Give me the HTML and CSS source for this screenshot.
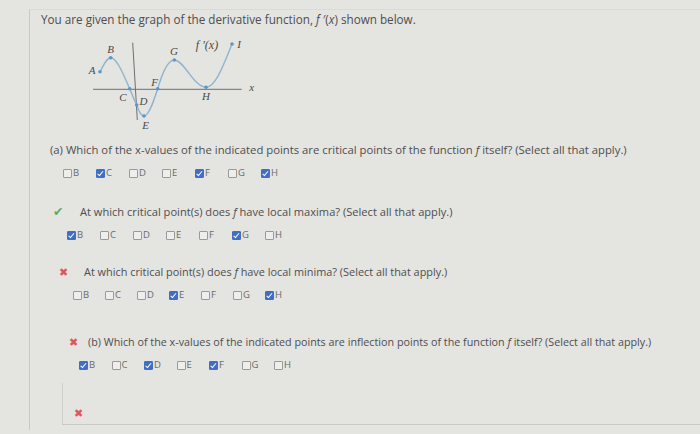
FILE: index.html
```html
<!DOCTYPE html>
<html>
<head>
<meta charset="utf-8">
<link rel="stylesheet" href="styles.css">
</head>
<body>
<div class="page">
  <div class="frame">
    <p class="title">You are given the graph of the derivative function, <i>f</i> ′(<i>x</i>) shown below.</p>
    <svg class="graph" width="180" height="96" viewBox="0 0 180 96">
      <line x1="13" y1="53.3" x2="161.7" y2="53.3" class="axis"/>
      <line x1="52.7" y1="6.7" x2="57.3" y2="84" class="axis"/>
      <path class="curve" d="M20,35.7 C24,28 27,21.7 30.7,21.7 C37,21.7 44,40 49.7,52.7 C52,58 54,64 56.7,69 C59,76 61,80 64,80 C69,80 74,64 77.7,52.7 C82,38 88,24 94.3,24 C104,24 114,51.3 126,51.3 C136,51.3 145,25 152,8"/>
      <g class="pts">
        <circle cx="20" cy="35.7" r="1.8"/>
        <circle cx="30.7" cy="21.7" r="1.8"/>
        <circle cx="49.7" cy="52.7" r="1.8"/>
        <circle cx="56.7" cy="69" r="1.8"/>
        <circle cx="64" cy="80" r="1.8"/>
        <circle cx="77.7" cy="52.7" r="1.8"/>
        <circle cx="94.3" cy="24" r="1.8"/>
        <circle cx="126" cy="51.3" r="1.8"/>
        <circle cx="152" cy="8" r="1.8"/>
      </g>
      <g class="lbl">
        <text x="12" y="38">A</text>
        <text x="30.7" y="17">B</text>
        <text x="43" y="64.5">C</text>
        <text x="63.5" y="69">D</text>
        <text x="65.7" y="93">E</text>
        <text x="74.7" y="49.5">F</text>
        <text x="94" y="19">G</text>
        <text x="126" y="64">H</text>
        <text class="fp" x="127" y="13">f ′(x)</text>
        <text x="159" y="12">I</text>
        <text x="171.7" y="55">x</text>
      </g>
    </svg>

    <section class="part part-a">
      <p class="q">(a) Which of the x-values of the indicated points are critical points of the function <i>f</i> itself? (Select all that apply.)</p>
      <div class="opts">
        <span class="opt"><span class="box"></span>B</span>
        <span class="opt"><span class="box on"></span>C</span>
        <span class="opt"><span class="box"></span>D</span>
        <span class="opt"><span class="box"></span>E</span>
        <span class="opt"><span class="box on"></span>F</span>
        <span class="opt"><span class="box"></span>G</span>
        <span class="opt"><span class="box on"></span>H</span>
      </div>
    </section>

    <div class="inner">
      <section class="part part-max">
        <p class="q"><span class="mark ok">✔</span>At which critical point(s) does <i>f</i> have local maxima? (Select all that apply.)</p>
        <div class="opts">
          <span class="opt"><span class="box on"></span>B</span>
          <span class="opt"><span class="box"></span>C</span>
          <span class="opt"><span class="box"></span>D</span>
          <span class="opt"><span class="box"></span>E</span>
          <span class="opt"><span class="box"></span>F</span>
          <span class="opt"><span class="box on"></span>G</span>
          <span class="opt"><span class="box"></span>H</span>
        </div>
      </section>

      <section class="part part-min">
        <p class="q"><span class="mark bad">✖</span>At which critical point(s) does <i>f</i> have local minima? (Select all that apply.)</p>
        <div class="opts">
          <span class="opt"><span class="box"></span>B</span>
          <span class="opt"><span class="box"></span>C</span>
          <span class="opt"><span class="box"></span>D</span>
          <span class="opt"><span class="box on"></span>E</span>
          <span class="opt"><span class="box"></span>F</span>
          <span class="opt"><span class="box"></span>G</span>
          <span class="opt"><span class="box on"></span>H</span>
        </div>
      </section>

      <section class="part part-b">
        <p class="q"><span class="mark bad">✖</span>(b) Which of the x-values of the indicated points are inflection points of the function <i>f</i> itself? (Select all that apply.)</p>
        <div class="opts">
          <span class="opt"><span class="box on"></span>B</span>
          <span class="opt"><span class="box"></span>C</span>
          <span class="opt"><span class="box on"></span>D</span>
          <span class="opt"><span class="box"></span>E</span>
          <span class="opt"><span class="box on"></span>F</span>
          <span class="opt"><span class="box"></span>G</span>
          <span class="opt"><span class="box"></span>H</span>
        </div>
      </section>

      <div class="feedback"><span class="mark bad">✖</span></div>
    </div>
  </div>
</div>
</body>
</html>
```

FILE: styles.css
```css
html, body {
  margin: 0;
  padding: 0;
  background: #e4e4e1;
  width: 700px;
  height: 434px;
  overflow: hidden;
  font-family: "Open Sans", "DejaVu Sans", sans-serif;
  color: #4e4e4e;
}
.page {
  padding-top: 9px;
  padding-left: 29px;
}
.frame {
  border-left: 1px solid #c9c9c6;
  border-top: 1px solid #dadad7;
  padding: 0 0 0 11px;
  height: 420px;
  display: flex;
  flex-direction: column;
}
.title {
  margin: 2px 0 0 0;
  font-size: 11.7px;
  line-height: 14px;
  white-space: nowrap;
}
.title i { font-style: italic; }
.graph {
  display: block;
  margin: 10px 0 0 39px;
}
.axis { stroke: #6f6f6f; stroke-width: 1; }
.curve { fill: none; stroke: #8fb4cf; stroke-width: 1.4; }
.pts circle { fill: #5d97c6; }
.lbl text {
  font-family: "Liberation Serif", "DejaVu Serif", serif;
  font-style: italic;
  font-size: 11px;
  fill: #4a4a4a;
  text-anchor: middle;
}
.lbl .fp { font-size: 12px; }
.part { display: flex; flex-direction: column; }
.q {
  margin: 0;
  font-size: 11.3px;
  line-height: 14px;
  white-space: nowrap;
}
.q i { font-style: italic; }
.opts {
  display: flex;
  margin-top: 11px;
  height: 10px;
}
.opt {
  width: 33px;
  display: flex;
  align-items: center;
  font-size: 9.5px;
  line-height: 10px;
  color: #6b6b6b;
}
.box {
  width: 7px;
  height: 7px;
  border: 1px solid #9a9a9a;
  border-radius: 1px;
  background: #eeeeec;
  margin-right: 1px;
  position: relative;
}
.box.on {
  background: #3f6ec2;
  border-color: #3f6ec2;
}
.box.on::after {
  content: "";
  position: absolute;
  left: 2px;
  top: 0;
  width: 2px;
  height: 4.5px;
  border: solid #fff;
  border-width: 0 1.5px 1.5px 0;
  transform: rotate(40deg);
}
.part-a { margin-top: 11px; padding-left: 9px; }
.part-a .opts { padding-left: 13px; }
.inner {
  margin-top: 27px;
  flex: 1;
  display: flex;
  flex-direction: column;
}
.mark {
  display: inline-block;
  font-size: 11px;
}
.ok { color: #5fa85c; font-size: 12.5px; }
.bad { color: #e0555a; }
.part-max { padding-left: 12px; }
.part-max .q { font-size: 11.1px; }
.part-max .mark { width: 27px; }
.part-max .opts { padding-left: 14px; }
.part-min { margin-top: 25px; padding-left: 18px; }
.part-min .q { font-size: 10.9px; }
.part-min .mark { width: 25px; }
.part-min .opts { padding-left: 14px; }
.part-min .opt { width: 32px; }
.part-b { margin-top: 35px; padding-left: 28px; }
.part-b .q { font-size: 10.75px; }
.part-b .mark { width: 19px; }
.part-b .opts { padding-left: 10px; }
.part-b .opt { width: 32.5px; }
.feedback {
  margin: 13px 0 5px 21px;
  flex: 1;
  border-left: 1px solid #d0d0cd;
  border-bottom: 1px solid #c9c9c6;
  padding: 17px 0 0 11px;
}
```
